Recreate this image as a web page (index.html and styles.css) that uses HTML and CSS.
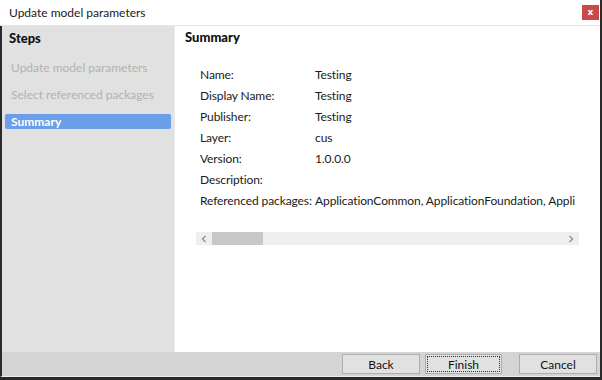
FILE: index.html
```html
<!DOCTYPE html>
<html>
<head>
<meta charset="utf-8">
<link rel="stylesheet" href="styles.css">
</head>
<body>
<div class="window">
  <div class="titlebar">
    <span class="title">Update model parameters</span>
    <span class="close">x</span>
  </div>
  <div class="main">
    <div class="steps">
      <div class="heading">Steps</div>
      <div class="step">Update model parameters</div>
      <div class="step">Select referenced packages</div>
      <div class="step active">Summary</div>
    </div>
    <div class="content">
      <div class="heading">Summary</div>
      <div class="fields">
        <div class="label">Name:</div><div class="value">Testing</div>
        <div class="label">Display Name:</div><div class="value">Testing</div>
        <div class="label">Publisher:</div><div class="value">Testing</div>
        <div class="label">Layer:</div><div class="value">cus</div>
        <div class="label">Version:</div><div class="value">1.0.0.0</div>
        <div class="label">Description:</div><div class="value"></div>
        <div class="label">Referenced packages:</div><div class="value">ApplicationCommon, ApplicationFoundation, Appli</div>
      </div>
      <div class="hscroll">
        <span class="arrow"><svg width="6" height="8" viewBox="0 0 6 8"><path d="M4.5 1 L1.5 4 L4.5 7" fill="none" stroke="#8a8a8a" stroke-width="1.2"/></svg></span>
        <div class="track"><div class="thumb"></div></div>
        <span class="arrow"><svg width="6" height="8" viewBox="0 0 6 8"><path d="M1.5 1 L4.5 4 L1.5 7" fill="none" stroke="#8a8a8a" stroke-width="1.2"/></svg></span>
      </div>
    </div>
  </div>
  <div class="footer">
    <button class="btn">Back</button>
    <button class="btn focus">Finish</button>
    <button class="btn cancel">Cancel</button>
  </div>
</div>
</body>
</html>
```
FILE: styles.css
```css
* { box-sizing: border-box; }
html, body { margin: 0; padding: 0; background: #fff; }
body {
  font-family: "Segoe UI", Lato, "Open Sans", sans-serif;
  font-size: 12px;
  color: #1a1a1a;
}
.window {
  width: 602px;
  height: 380px;
  display: flex;
  flex-direction: column;
  border-right: 2px solid #2a2a2a;
  border-bottom: 3px solid #2a2a2a;
  background: #fff;
}
.titlebar {
  height: 26px;
  flex: none;
  display: flex;
  align-items: center;
  justify-content: space-between;
  padding: 0 1px 0 9px;
  border-bottom: 1px solid #e6e6e6;
}
.title { font-size: 12px; color: #222; }
.close {
  width: 17px;
  height: 15px;
  background: #c9484a;
  color: #fff;
  font-size: 9px;
  font-weight: bold;
  line-height: 14px;
  text-align: center;
  font-family: "DejaVu Sans", sans-serif;
}
.main {
  flex: 1;
  display: flex;
  border-left: 2px solid #2a2a2a;
}
.steps {
  width: 173px;
  background: #e1e1e1;
  border-right: 1px solid #eaeaea;
  padding: 4px 3px 0 3px;
}
.heading {
  font-weight: 900;
  font-size: 13px;
  height: 16px;
  line-height: 16px;
  padding-left: 4px;
  margin-bottom: 14px;
  color: #111;
}
.step {
  color: #b2b2b2;
  height: 15px;
  line-height: 15px;
  padding-left: 6px;
  margin-bottom: 12px;
}
.step.active {
  background: #6a9ee9;
  color: #fff;
  font-weight: bold;
  border-radius: 2px;
}
.content {
  flex: 1;
  padding: 3px 21px 0 6px;
  min-width: 0;
}
.content .heading { margin-bottom: 12px; }
.fields {
  display: grid;
  grid-template-columns: 115px 1fr;
  grid-auto-rows: 21px;
  padding-left: 19px;
  margin-top: 19px;
  line-height: 21px;
  letter-spacing: -0.1px;
}
.value { white-space: nowrap; }
.hscroll {
  margin: 21px 0 0 15px;
  height: 13px;
  background: #efefef;
  display: flex;
  align-items: center;
}
.arrow {
  width: 16px;
  height: 13px;
  display: flex;
  align-items: center;
  justify-content: center;
}
.track { flex: 1; height: 13px; }
.thumb { width: 51px; height: 13px; background: #c8c8c8; }
.footer {
  height: 25px;
  flex: none;
  background: #d4d4d4;
  border-left: 2px solid #2a2a2a;
  border-bottom: 1px solid #efefef;
  display: flex;
  align-items: center;
  padding: 0 3px 0 0;
  justify-content: flex-end;
}
.btn {
  width: 78px;
  height: 20px;
  margin-left: 5px;
  background: #e1e1e1;
  border: 1px solid #adadad;
  font-family: inherit;
  font-size: 12px;
  color: #111;
  padding: 0;
}
.btn.focus {
  width: 77px;
  outline: 1px dotted #333;
  outline-offset: -3px;
}
.btn.cancel { margin-left: 17px; }
```
